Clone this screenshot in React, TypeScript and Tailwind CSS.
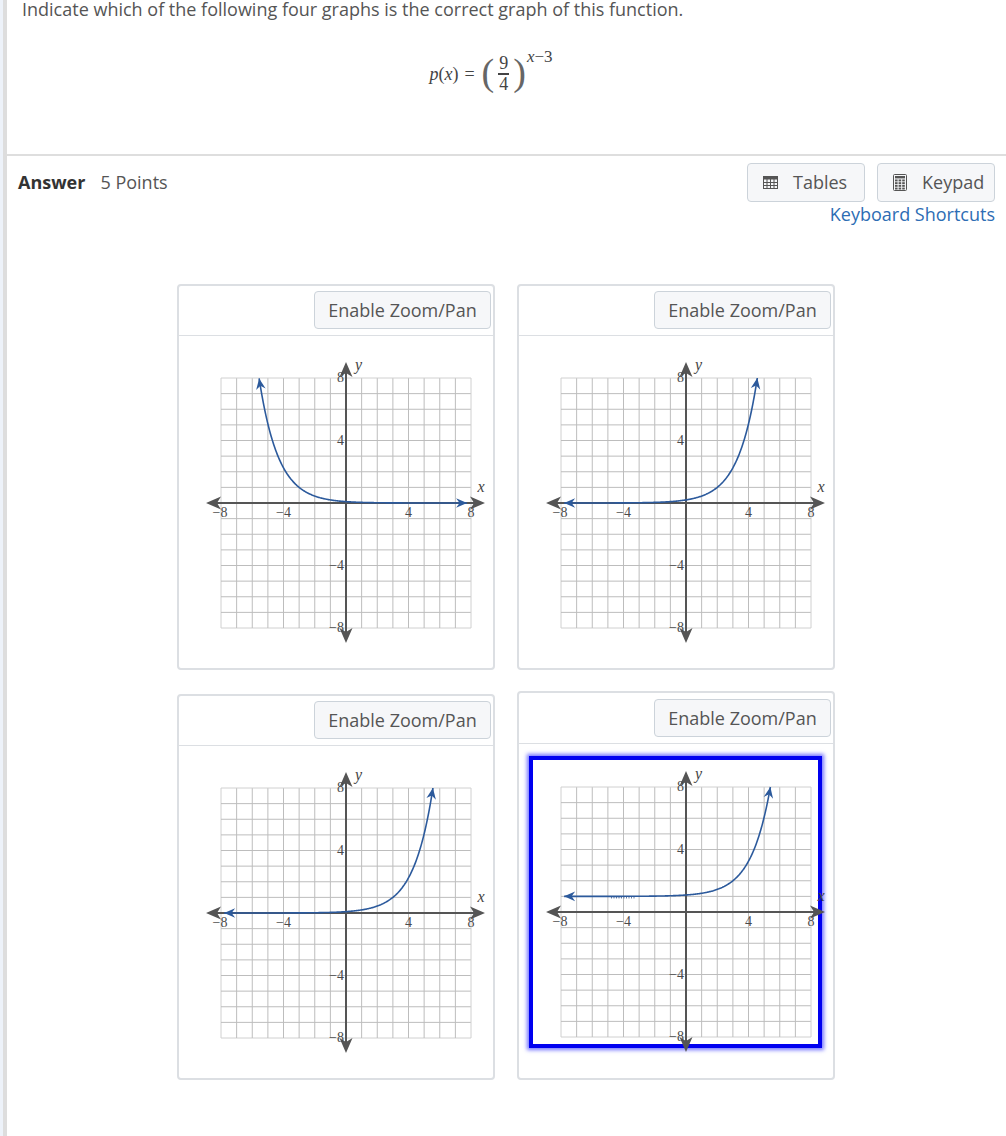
import React from "react";

const S = 15.625;
const BLUE = "#2c5a9c";
const AX = "#555555";

type GraphProps = {
  f: (x: number) => number;
  x0: number;
  x1: number;
  ox: number;
  oy: number;
  w: number;
  h: number;
  dotted?: boolean;
};

function arrowHead(tipX: number, tipY: number, dx: number, dy: number, len: number, half: number, notch: number) {
  const l = Math.hypot(dx, dy) || 1;
  const ux = dx / l;
  const uy = dy / l;
  const nx = -uy;
  const ny = ux;
  const bx = tipX - ux * len;
  const by = tipY - uy * len;
  const p1 = `${bx + nx * half},${by + ny * half}`;
  const p2 = `${tipX - ux * (len - notch)},${tipY - uy * (len - notch)}`;
  const p3 = `${bx - nx * half},${by - ny * half}`;
  return `M${tipX},${tipY} L${p1} L${p2} L${p3} Z`;
}

function Graph({ f, x0, x1, ox, oy, w, h, dotted }: GraphProps) {
  const px = (x: number) => ox + x * S;
  const py = (y: number) => oy - y * S;
  const grid: React.ReactElement[] = [];
  for (let i = -8; i <= 8; i++) {
    const c = i === -8 || i === 8 ? "#d0d0d0" : "#bdbdbd";
    grid.push(<line key={`v${i}`} x1={px(i)} y1={py(8)} x2={px(i)} y2={py(-8)} stroke={c} strokeWidth={1} />);
    grid.push(<line key={`h${i}`} x1={px(-8)} y1={py(i)} x2={px(8)} y2={py(i)} stroke={c} strokeWidth={1} />);
  }
  const N = 300;
  const pts: [number, number][] = [];
  for (let i = 0; i <= N; i++) {
    const x = x0 + ((x1 - x0) * i) / N;
    pts.push([px(x), py(f(x))]);
  }
  const d = pts.map((p, i) => `${i === 0 ? "M" : "L"}${p[0].toFixed(2)},${p[1].toFixed(2)}`).join(" ");
  const a = pts[0];
  const a2 = pts[3];
  const b = pts[N];
  const b2 = pts[N - 3];
  const serif = "'Liberation Serif', 'Times New Roman', serif";
  const axL = px(-8) - 15;
  const axR = px(8) + 14;
  const axT = py(8) - 16;
  const axB = py(-8) + 15;
  return (
    <svg width={w} height={h} className="block overflow-visible">
      {grid}
      <line x1={axL + 8} y1={oy} x2={axR - 8} y2={oy} stroke={AX} strokeWidth={2} />
      <line x1={ox} y1={axT + 8} x2={ox} y2={axB - 8} stroke={AX} strokeWidth={2} />
      <path d={arrowHead(axL, oy, -1, 0, 15, 6.5, 4)} fill={AX} />
      <path d={arrowHead(axR, oy, 1, 0, 15, 6.5, 4)} fill={AX} />
      <path d={arrowHead(ox, axT, 0, -1, 15, 6.5, 4)} fill={AX} />
      <path d={arrowHead(ox, axB, 0, 1, 15, 6.5, 4)} fill={AX} />
      <g fontFamily={serif} fontSize={14} fill="#4a4a4a">
        <text x={px(-8) - 1} y={oy + 14} textAnchor="middle">−8</text>
        <text x={px(-4)} y={oy + 14} textAnchor="middle">−4</text>
        <text x={px(4)} y={oy + 14} textAnchor="middle">4</text>
        <text x={px(8)} y={oy + 14} textAnchor="middle">8</text>
        <text x={ox - 2} y={py(8) + 4} textAnchor="end">8</text>
        <text x={ox - 2} y={py(4) + 4} textAnchor="end">4</text>
        <text x={ox - 2} y={py(-4) + 4} textAnchor="end">−4</text>
        <text x={ox - 2} y={py(-8) + 4} textAnchor="end">−8</text>
      </g>
      <g fontFamily={serif} fontSize={16} fontStyle="italic" fill="#444">
        <text x={ox + 135} y={oy - 11} textAnchor="middle">x</text>
        <text x={ox + 9} y={oy - 133}>y</text>
      </g>
      {dotted && (
        <line x1={px(-4.8)} y1={py(f(-4)) + 1.5} x2={px(-3.2)} y2={py(f(-4)) + 1.5} stroke="#1d3f7a" strokeWidth={1} strokeDasharray="1 1.5" />
      )}
      <path d={d} fill="none" stroke={BLUE} strokeWidth={1.6} />
      <path d={arrowHead(a[0], a[1], a[0] - a2[0], a[1] - a2[1], 11, 4.8, 3.5)} fill={BLUE} />
      <path d={arrowHead(b[0], b[1], b[0] - b2[0], b[1] - b2[1], 11, 4.8, 3.5)} fill={BLUE} />
    </svg>
  );
}

function ZoomButton() {
  return (
    <button className="h-[38px] w-[177px] rounded-[4px] border-[1.5px] border-[#ccd3da] bg-[#f6f7f9] text-[18px] text-[#555] font-['Open_Sans',sans-serif]">
      Enable Zoom/Pan
    </button>
  );
}

function Card({ children, tall }: { children: React.ReactNode; tall?: boolean }) {
  return (
    <div className={`w-[318px] rounded-[4px] border-2 border-[#dcdfe3] bg-white ${tall ? "h-[389px]" : "h-[386px]"}`}>
      <div className={`flex justify-end border-b-[1.5px] border-[#dcdfe3] pr-[2px] ${tall ? "pt-[6px] pb-[6px]" : "pt-[5px] pb-[6px]"}`}>
        <ZoomButton />
      </div>
      {children}
    </div>
  );
}

function TableIcon() {
  return (
    <svg width="15" height="13" viewBox="0 0 15 13">
      <rect x="0.5" y="0.5" width="14" height="12" fill="none" stroke="#555" />
      <rect x="0.5" y="0.5" width="14" height="3" fill="#555" />
      <line x1="4" y1="3" x2="4" y2="12.5" stroke="#555" />
      <line x1="7.5" y1="3" x2="7.5" y2="12.5" stroke="#555" />
      <line x1="11" y1="3" x2="11" y2="12.5" stroke="#555" />
      <line x1="0.5" y1="6.5" x2="14.5" y2="6.5" stroke="#555" />
      <line x1="0.5" y1="9.5" x2="14.5" y2="9.5" stroke="#555" />
    </svg>
  );
}

function KeypadIcon() {
  const keys: React.ReactElement[] = [];
  for (let r = 0; r < 4; r++) {
    for (let c = 0; c < 3; c++) {
      keys.push(<rect key={`${r}-${c}`} x={2 + c * 3.6} y={5.5 + r * 2.7} width={2.6} height={1.9} fill="#555" />);
    }
  }
  return (
    <svg width="14" height="17" viewBox="0 0 14 17">
      <rect x="0.5" y="0.5" width="13" height="16" rx="1" fill="none" stroke="#555" />
      <rect x="2" y="2" width="10" height="2.4" fill="#555" />
      {keys}
    </svg>
  );
}

export default function App() {
  const g1 = (x: number) => Math.pow(4 / 9, x + 3);
  const g2 = (x: number) => Math.pow(9 / 4, x - 2);
  const g3 = (x: number) => Math.pow(9 / 4, x - 3);
  const g4 = (x: number) => Math.pow(9 / 4, x - 3) + 1;
  const up = (k: number, c: number) => c + Math.log(8 - k) / Math.log(9 / 4);
  return (
    <div className="flex min-h-[1136px] w-[1006px] bg-white font-['Open_Sans',sans-serif] overflow-hidden">
      <div className="w-[3px] shrink-0 bg-[#edf2f9]" />
      <div className="w-[4px] shrink-0 bg-[#dddddd]" />
      <div className="flex-1 flex flex-col">
        <div className="flex h-[156px] flex-col border-b-2 border-[#dedede] pl-[15px]">
          <div className="text-[18px] leading-[18px] text-[#555]">
            Indicate which of the following four graphs is the correct graph of this function.
          </div>
          <div className="mt-[36px] flex h-[40px] items-center justify-center pr-[46px] font-['Liberation_Serif',serif] text-[#444]">
            <span className="text-[18px] mr-[7px]">
              <i>p</i>(<i>x</i>)<span className="ml-[6px]">=</span>
            </span>
            <span className="text-[38px] font-light leading-none text-[#666] mb-[4px]">(</span>
            <span className="mx-[4px] flex flex-col items-center text-[18px] leading-[13px]">
              <span>9</span>
              <span className="my-[3px] h-[1.5px] w-[11px] bg-[#444]" />
              <span>4</span>
            </span>
            <span className="text-[38px] font-light leading-none text-[#666] mb-[4px]">)</span>
            <span className="self-start mt-[-6px] text-[17px] leading-[17px] ml-[1px]">
              <i>x</i>−3
            </span>
          </div>
        </div>
        <div className="flex justify-between pl-[11px] pr-[11px] pt-[7px]">
          <div className="flex items-baseline gap-[15px] pt-[6px] text-[18px]">
            <span className="font-bold text-[#333]">Answer</span>
            <span className="text-[#555]">5 Points</span>
          </div>
          <div className="flex flex-col items-end">
            <div className="flex gap-[12px]">
              <button className="flex h-[39px] w-[118px] items-center gap-[15px] rounded-[4px] border-[1.5px] border-[#ccd3da] bg-[#f6f7f9] pl-[15px] text-[18px] text-[#555]">
                <TableIcon />
                <span>Tables</span>
              </button>
              <button className="flex h-[39px] w-[118px] items-center gap-[15px] rounded-[4px] border-[1.5px] border-[#ccd3da] bg-[#f6f7f9] pl-[15px] text-[18px] text-[#555]">
                <KeypadIcon />
                <span>Keypad</span>
              </button>
            </div>
            <a className="mt-[1px] text-[18px] leading-[22px] text-[#2d6db4]">Keyboard Shortcuts</a>
          </div>
        </div>
        <div className="mt-[59px] flex flex-wrap justify-center gap-x-[22px] pr-[1px]">
          <div className="flex flex-col gap-[24px]">
            <Card>
              <Graph f={g1} x0={-5.56} x1={7.75} ox={167} oy={167} w={314} h={330} />
            </Card>
            <Card>
              <Graph f={g3} x0={-7.8} x1={up(0, 3)} ox={167} oy={167} w={314} h={330} />
            </Card>
          </div>
          <div className="flex flex-col gap-[21px]">
            <Card>
              <Graph f={g2} x0={-7.8} x1={up(0, 2)} ox={167} oy={167} w={314} h={330} />
            </Card>
            <Card tall>
              <div className="ml-[10px] mt-[12px] h-[292px] w-[293px] border-[4px] border-[#0000f0] shadow-[0_0_4px_2px_rgba(0,0,255,0.55)]">
                <Graph f={g4} x0={-7.8} x1={up(1, 3)} ox={153} oy={152} w={285} h={284} dotted />
              </div>
            </Card>
          </div>
        </div>
      </div>
    </div>
  );
}
